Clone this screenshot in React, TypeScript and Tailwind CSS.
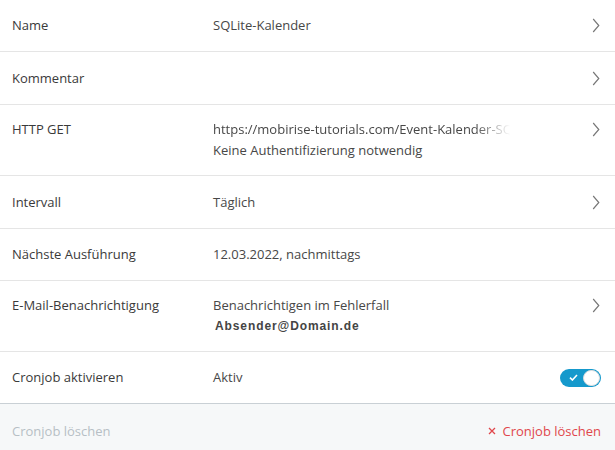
import React from "react";

const Chevron = () => (
  <svg width="8" height="15" viewBox="0 0 8 15" className="shrink-0">
    <path d="M1.2 1 L6.8 7.5 L1.2 14" fill="none" stroke="#777777" strokeWidth="1.15" />
  </svg>
);

type RowProps = {
  label: string;
  h: string;
  chevron?: boolean;
  top?: boolean;
  children?: React.ReactNode;
};

const Row = ({ label, h, chevron, top, children }: RowProps) => (
  <div className={`flex border-b border-[#e5e5e5] ${h} ${top ? "items-start pt-[14px]" : "items-center"}`}>
    <div className="w-[213px] shrink-0 pl-3 text-[#3a3a3a] leading-[21px]">{label}</div>
    <div className="flex-1 min-w-0 text-[#474747]">{children}</div>
    <div className={`w-[22px] shrink-0 mr-[15px] flex justify-end ${top ? "pt-[3px]" : ""}`}>
      {chevron ? <Chevron /> : null}
    </div>
  </div>
);

export default function App() {
  return (
    <div className="w-[615px] h-[450px] overflow-hidden bg-white text-[13px] leading-[21px] font-['Open_Sans',sans-serif]">
      <Row label="Name" h="h-[52px]" chevron>
        SQLite-Kalender
      </Row>
      <Row label="Kommentar" h="h-[53px]" chevron />
      <Row label="HTTP GET" h="h-[71px]" chevron top>
        <div className="w-[297px] whitespace-nowrap overflow-hidden [mask-image:linear-gradient(to_right,black_88%,transparent)]">
          https://mobirise-tutorials.com/Event-Kalender-SQLite
        </div>
        <div>Keine Authentifizierung notwendig</div>
      </Row>
      <Row label="Intervall" h="h-[53px]" chevron>
        Täglich
      </Row>
      <Row label="Nächste Ausführung" h="h-[52px]">
        12.03.2022, nachmittags
      </Row>
      <Row label="E-Mail-Benachrichtigung" h="h-[71px]" chevron top>
        <div className="leading-[21px]">Benachrichtigen im Fehlerfall</div>
        <div className="leading-[20px] pl-[2px] font-['Liberation_Sans',sans-serif] font-bold text-[12px] tracking-[0.9px] text-[#444444]">
          Absender@Domain.de
        </div>
      </Row>
      <div className="flex items-center h-[52px] border-b border-[#c9d0d5]">
        <div className="w-[213px] shrink-0 pl-3 text-[#3a3a3a]">Cronjob aktivieren</div>
        <div className="flex-1 text-[#474747]">Aktiv</div>
        <div className="mr-[14px] w-[41px] h-[18px] rounded-full bg-[#1599cc] flex items-center justify-between pl-[9px] pr-[1px]">
          <svg width="9" height="7" viewBox="0 0 9 7">
            <path d="M1 3.6 L3.4 6 L8 1" fill="none" stroke="white" strokeWidth="1.6" />
          </svg>
          <div className="w-[17px] h-[16px] rounded-full bg-white border border-[#d8dde0]" />
        </div>
      </div>
      <div className="flex items-center justify-between h-[54px] bg-[#f6f8f9] px-3 pr-[14px]">
        <span className="text-[#b7bfc5]">Cronjob löschen</span>
        <span className="text-[#e0474c] flex items-center gap-[7px]">
          <svg width="8" height="8" viewBox="0 0 8 8">
            <path d="M1 1 L7 7 M7 1 L1 7" stroke="#e0474c" strokeWidth="1.3" />
          </svg>
          Cronjob löschen
        </span>
      </div>
    </div>
  );
}
